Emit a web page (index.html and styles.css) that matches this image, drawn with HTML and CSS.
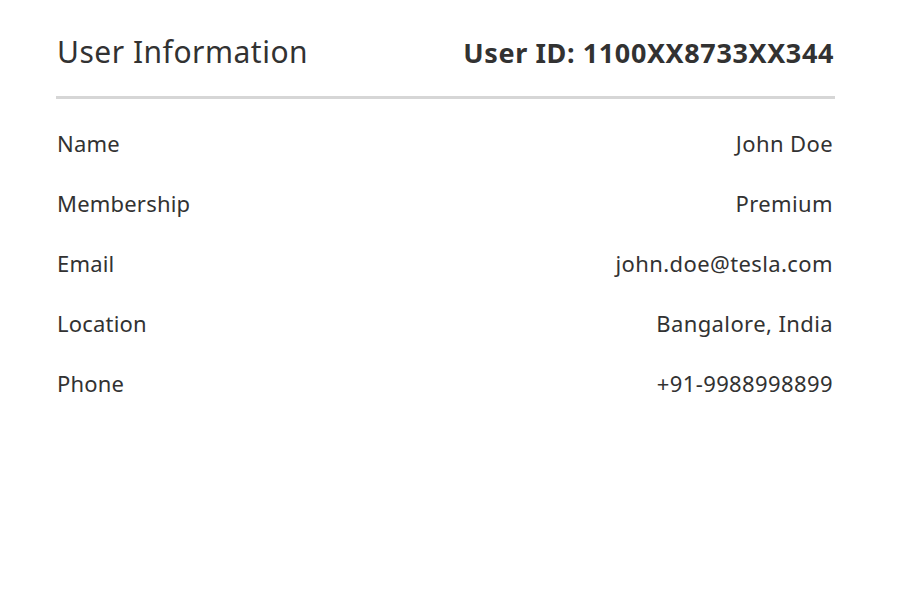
FILE: index.html
```html
<!DOCTYPE html>
<html>
<head>
<meta charset="utf-8">
<link rel="stylesheet" href="styles.css">
</head>
<body>
<div class="card">
  <div class="header">
    <h1 class="title">User Information</h1>
    <div class="uid">User ID: 1100XX8733XX344</div>
  </div>
  <div class="rows">
    <div class="row"><span class="label">Name</span><span class="value">John Doe</span></div>
    <div class="row"><span class="label">Membership</span><span class="value">Premium</span></div>
    <div class="row"><span class="label">Email</span><span class="value">john.doe@tesla.com</span></div>
    <div class="row"><span class="label">Location</span><span class="value">Bangalore, India</span></div>
    <div class="row"><span class="label">Phone</span><span class="value">+91-9988998899</span></div>
  </div>
</div>
</body>
</html>
```
FILE: styles.css
```css
html, body {
  margin: 0;
  padding: 0;
  background: #ffffff;
}
body {
  font-family: "Noto Sans", "Open Sans", sans-serif;
  color: #323232;
}
.card {
  width: 779px;
  margin-left: 56px;
  padding-top: 30px;
}
.header {
  display: flex;
  justify-content: space-between;
  align-items: baseline;
  padding: 0 1px 22px 1px;
  border-bottom: 3px solid #d6d6d6;
}
.title {
  margin: 0;
  font-size: 30px;
  font-weight: 400;
  line-height: 44px;
  letter-spacing: 0.5px;
}
.uid {
  font-size: 27px;
  font-weight: 700;
  letter-spacing: 0.6px;
}
.rows {
  padding: 29px 2px 0 1px;
  display: flex;
  flex-direction: column;
  gap: 30px;
}
.row {
  display: flex;
  justify-content: space-between;
  font-size: 22px;
  line-height: 30px;
  letter-spacing: 0.2px;
}
.value {
  letter-spacing: 0.4px;
}
```
